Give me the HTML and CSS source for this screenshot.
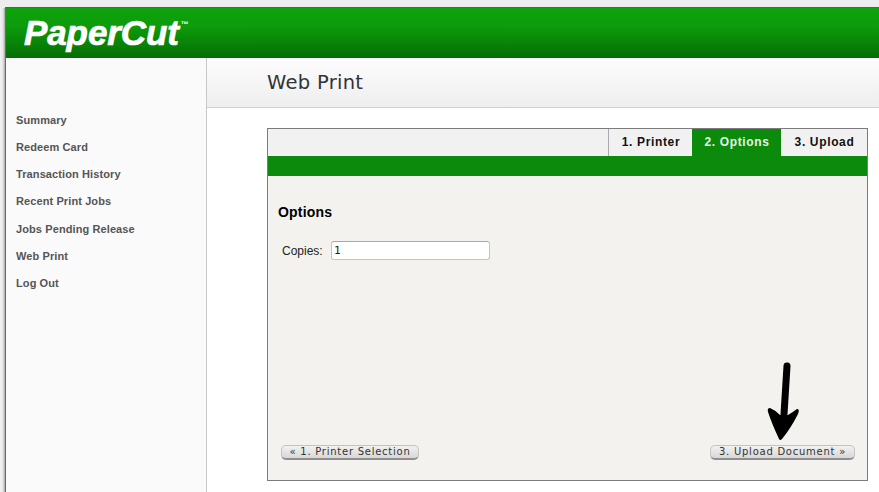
FILE: index.html
```html
<!DOCTYPE html>
<html lang="en">
<head>
<meta charset="utf-8">
<title>PaperCut Web Print</title>
<link rel="stylesheet" href="styles.css">
</head>
<body>
<div class="window">
  <header class="header">
    <span class="logo">PaperCut</span><span class="tm">™</span>
  </header>
  <div class="columns">
    <nav class="sidebar">
      <a class="nav-item">Summary</a>
      <a class="nav-item">Redeem Card</a>
      <a class="nav-item">Transaction History</a>
      <a class="nav-item">Recent Print Jobs</a>
      <a class="nav-item nav-item-tall">Jobs Pending Release</a>
      <a class="nav-item">Web Print</a>
      <a class="nav-item">Log Out</a>
    </nav>
    <main class="main">
      <div class="title-band"><h1 class="page-title">Web Print</h1></div>
      <section class="panel">
        <div class="tabs">
          <div class="tab">1. Printer</div>
          <div class="tab tab-active">2. Options</div>
          <div class="tab">3. Upload</div>
        </div>
        <div class="green-bar"></div>
        <div class="panel-body">
          <h2 class="section-title">Options</h2>
          <div class="field">
            <label class="field-label" for="copies">Copies:</label>
            <input class="field-input" id="copies" type="text" value="1">
          </div>
          <div class="actions">
            <button class="btn btn-back">« 1. Printer Selection</button>
            <button class="btn btn-next">3. Upload Document »</button>
          </div>
          <svg class="arrow" width="40" height="90" viewBox="0 0 40 90">
            <path d="M22 8 L19 56" fill="none" stroke="#000" stroke-width="7" stroke-linecap="round"/>
            <path d="M5 50 Q10 52 15 57 L23 57 Q28 54 32 51 Q35 51 33 56 Q26 70 17 81 Q15 83 14 81 Q7 66 3 54 Q2 50 5 50 Z" fill="#000"/>
          </svg>
        </div>
      </section>
    </main>
  </div>
</div>
</body>
</html>
```

FILE: styles.css
```css
* { box-sizing: border-box; }

html, body { margin: 0; padding: 0; height: 100%; }

body {
  background: #fff;
  overflow: hidden;
  font-family: "Liberation Sans", Arial, sans-serif;
}

.window {
  height: 492px;
  width: 879px;
  padding: 7px 0 0 5px;
  background-color: #ededed;
  background-image: linear-gradient(90deg, #f4f4f4 0, #e4e4e4 3px, #a5a5a5 5px);
  background-size: 5px 100%;
  background-repeat: no-repeat;
  background-position: 0 8px;
  display: flex;
  flex-direction: column;
}

.header {
  height: 51px;
  flex: none;
  border-top: 1px solid #5c5c5c;
  border-left: 1px solid #6a6a6a;
  background: linear-gradient(180deg, #0ea30c 0, #0d9c0b 35%, #056e05 100%);
  padding: 5px 0 0 18px;
  display: flex;
  align-items: flex-start;
  color: #fff;
}

.logo {
  font-size: 35px;
  line-height: 40px;
  font-weight: bold;
  font-style: italic;
  letter-spacing: -0.1px;
  -webkit-text-stroke: 0.7px #fff;
}

.tm { font-size: 8px; line-height: 10px; font-weight: bold; margin: 7px 0 0 2px; }

.columns { flex: 1; display: flex; min-height: 0; }

.sidebar {
  width: 202px;
  flex: none;
  background: #fafafa;
  border-left: 1px solid #6a6a6a;
  border-right: 1px solid #c8c8c8;
  padding-top: 54px;
  display: flex;
  flex-direction: column;
}

.nav-item {
  height: 27px;
  padding-left: 10px;
  font-size: 11px;
  line-height: 17px;
  font-weight: bold;
  color: #555;
  letter-spacing: 0.1px;
}

.nav-item-tall { height: 28px; padding-top: 1px; }

.main { flex: 1; min-width: 0; background: #fff; display: flex; flex-direction: column; }

.title-band {
  height: 50px;
  flex: none;
  padding: 13px 0 0 60px;
  background: linear-gradient(180deg, #fdfdfd 0, #eeeeee 100%);
  border-bottom: 1px solid #d0d0d0;
}

.page-title {
  margin: 0;
  line-height: 24px;
  font-weight: normal;
  color: #333338;
  letter-spacing: 0.3px;
  font-family: "DejaVu Sans", sans-serif;
  font-size: 19.5px;
}

.panel {
  margin: 20px 0 0 60px;
  width: 601px;
  height: 353px;
  flex: none;
  border: 1px solid #7c7c7c;
  background: #f4f2ee;
  display: flex;
  flex-direction: column;
}

.tabs {
  height: 27px;
  flex: none;
  display: flex;
  justify-content: flex-end;
  background: #f1f1f1;
}

.tab {
  width: 84px;
  padding-left: 1px;
  font-size: 12px;
  line-height: 27px;
  font-weight: bold;
  text-align: center;
  color: #111;
  border-left: 1px solid #aaa;
  letter-spacing: 0.65px;
}

.tab-active { width: 89px; background: #0b8a0b; color: #e6f5e6; border-left: 0; }

.tab:last-child { width: 86px; border-left: 0; }

.green-bar { height: 20px; flex: none; background: #0b8a0b; }

.panel-body { flex: 1; position: relative; padding: 28px 10px 0; display: flex; flex-direction: column; min-height: 0; }

.section-title {
  margin: 0;
  font-size: 14px;
  line-height: 16px;
  font-weight: bold;
  color: #000;
  letter-spacing: 0.2px;
}

.field { display: flex; align-items: center; margin: 21px 0 0 4px; }

.field-label { font-size: 12px; line-height: 18px; color: #222; width: 49px; }

.field-input {
  width: 159px;
  height: 19px;
  padding: 0 2px;
  background: #fff;
  border: 1px solid #c4c4c4;
  border-top-color: #a8a8a8;
  border-radius: 3px;
  font-family: "DejaVu Sans Mono", monospace;
  font-size: 11px;
  color: #222;
}

.actions { margin-top: auto; margin-bottom: 20px; padding: 0 2px 0 3px; display: flex; justify-content: space-between; }

.btn {
  height: 15px;
  padding: 0;
  border: 1px solid #c4c4c4;
  border-bottom: 2px solid #8f8f8f;
  border-radius: 5px;
  background: linear-gradient(180deg, #f1f1f1 0, #d8d8d8 100%);
  font-family: "DejaVu Sans", sans-serif;
  font-size: 10px;
  line-height: 12px;
  letter-spacing: 0.75px;
  color: #333;
}

.btn-back { width: 138px; }
.btn-next { width: 145px; }

.arrow { position: absolute; left: 497px; top: 182px; }
```
